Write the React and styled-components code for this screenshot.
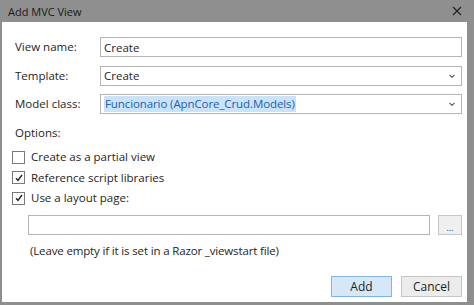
import React from 'react';
import styled, {createGlobalStyle} from 'styled-components';

const GlobalStyle = createGlobalStyle`
    html, body {
        margin: 0;
        padding: 0;
        background: #8f8f8f;
    }
    body {
        font-family: "Open Sans", "Noto Sans", "Liberation Sans", sans-serif;
        font-size: 11.5px;
        color: #1e1e1e;
    }
`

const Frame = styled.div`
    width: 474px;
    height: 305px;
    display: flex;
    flex-direction: column;
    background: #8f8f8f;
`

const TitleBar = styled.div`
    height: 22px;
    display: flex;
    align-items: center;
    justify-content: space-between;
    padding: 0 12px 0 8px;
    font-size: 11px;
    color: #1a1a1a;
`

const CloseIcon = styled.svg`
    width: 10px;
    height: 10px;
`

const Body = styled.div`
    flex: 1;
    margin: 0 7px 3px 2px;
    background: #ffffff;
    padding: 15px 5px 0 13px;
    display: flex;
    flex-direction: column;
`

const FieldGrid = styled.div`
    display: grid;
    grid-template-columns: 85px 1fr;
    row-gap: 8.5px;
    align-items: center;
`

const Label = styled.span`
    line-height: 20px;
`

const Field = styled.div`
    height: 20px;
    box-sizing: border-box;
    border: 1px solid #b4b4b4;
    background: #fff;
    display: flex;
    align-items: center;
    padding: 0 6px 0 3px;
    justify-content: space-between;
    ${p => p.$grow && 'flex: 1;'}
`

const Selected = styled.span`
    background: #c9e3fb;
    color: #1f5fa8;
    padding: 0 1px;
    line-height: 16px;
    letter-spacing: -0.1px;
`

const Chevron = styled.svg`
    width: 6px;
    height: 4px;
`

const Options = styled.div`
    margin-top: 11px;
    line-height: 16px;
`

const CheckList = styled.div`
    margin-top: 8px;
    margin-left: -3px;
    display: flex;
    flex-direction: column;
    gap: 4.5px;
`

const CheckRow = styled.label`
    display: flex;
    align-items: center;
    gap: 6px;
    line-height: 16px;
`

const Box = styled.span`
    width: 13px;
    height: 13px;
    box-sizing: border-box;
    border: 1px solid #7a7a7a;
    background: #fff;
    display: flex;
    align-items: center;
    justify-content: center;
`

const LayoutRow = styled.div`
    margin-top: 9px;
    margin-left: 13px;
    display: flex;
    gap: 8px;
`

const SmallButton = styled.div`
    width: 24px;
    height: 20px;
    box-sizing: border-box;
    border: 1px solid #c6c6c6;
    background: #efefef;
    display: flex;
    align-items: flex-end;
    justify-content: center;
    font-size: 9px;
    line-height: 13px;
    color: #444;
`

const Hint = styled.div`
    margin-top: 8px;
    margin-left: 15px;
    line-height: 16px;
    letter-spacing: -0.15px;
`

const Footer = styled.div`
    margin-top: auto;
    margin-bottom: 5px;
    display: flex;
    justify-content: flex-end;
    gap: 9px;
`

const Button = styled.div`
    width: 61px;
    height: 21px;
    box-sizing: border-box;
    border: 1px solid ${p => p.$primary ? '#7fb6e8' : '#c6c6c6'};
    background: ${p => p.$primary ? '#d6e8f8' : '#ececec'};
    display: flex;
    align-items: center;
    justify-content: center;
    font-size: 12px;
`

const ChevronDown = () => (
    <Chevron viewBox="0 0 6 4">
        <path d="M0.5 0.8 L3 3.3 L5.5 0.8" fill="none" stroke="#555" strokeWidth="1.1"/>
    </Chevron>
)

const Check = ({checked}) => (
    <Box>
        {checked &&
            <svg width="8" height="8" viewBox="0 0 8 8">
                <path d="M1 4.2 L3 6.5 L7 1" fill="none" stroke="#222" strokeWidth="1.4"/>
            </svg>}
    </Box>
)

function App(){
    return (
        <>
            <GlobalStyle/>
            <Frame>
                <TitleBar>
                    <span>Add MVC View</span>
                    <CloseIcon viewBox="0 0 10 10">
                        <path d="M1 1 L9 9 M9 1 L1 9" stroke="#222" strokeWidth="1.2"/>
                    </CloseIcon>
                </TitleBar>
                <Body>
                    <FieldGrid>
                        <Label>View name:</Label>
                        <Field>Create</Field>
                        <Label>Template:</Label>
                        <Field>Create<ChevronDown/></Field>
                        <Label>Model class:</Label>
                        <Field>
                            <Selected>Funcionario (ApnCore_Crud.Models)</Selected>
                            <ChevronDown/>
                        </Field>
                    </FieldGrid>
                    <Options>Options:</Options>
                    <CheckList>
                        <CheckRow><Check/>Create as a partial view</CheckRow>
                        <CheckRow><Check checked/>Reference script libraries</CheckRow>
                        <CheckRow><Check checked/>Use a layout page:</CheckRow>
                    </CheckList>
                    <LayoutRow>
                        <Field $grow/>
                        <SmallButton>...</SmallButton>
                    </LayoutRow>
                    <Hint>(Leave empty if it is set in a Razor _viewstart file)</Hint>
                    <Footer>
                        <Button $primary>Add</Button>
                        <Button>Cancel</Button>
                    </Footer>
                </Body>
            </Frame>
        </>
    )
}

export default App;
